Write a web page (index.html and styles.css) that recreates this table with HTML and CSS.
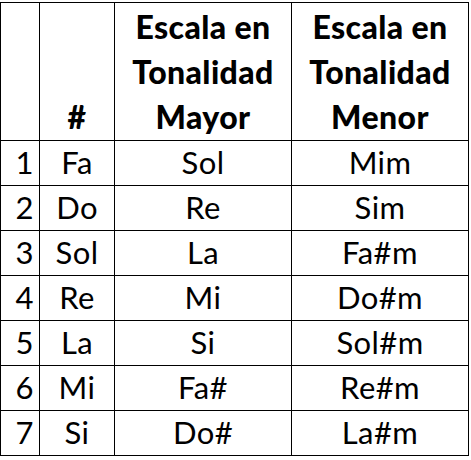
FILE: index.html
```html
<!DOCTYPE html>
<html lang="es">
<head>
<meta charset="utf-8">
<title>Escalas</title>
<link rel="stylesheet" href="styles.css">
</head>
<body>
<div class="sheet">
  <div class="grid">
    <div class="cell head"></div>
    <div class="cell head">#</div>
    <div class="cell head">Escala en<br>Tonalidad<br>Mayor</div>
    <div class="cell head">Escala en<br>Tonalidad<br>Menor</div>

    <div class="cell num">1</div><div class="cell">Fa</div><div class="cell">Sol</div><div class="cell">Mim</div>
    <div class="cell num">2</div><div class="cell">Do</div><div class="cell">Re</div><div class="cell">Sim</div>
    <div class="cell num">3</div><div class="cell">Sol</div><div class="cell">La</div><div class="cell">Fa#m</div>
    <div class="cell num">4</div><div class="cell">Re</div><div class="cell">Mi</div><div class="cell">Do#m</div>
    <div class="cell num">5</div><div class="cell">La</div><div class="cell">Si</div><div class="cell">Sol#m</div>
    <div class="cell num">6</div><div class="cell">Mi</div><div class="cell">Fa#</div><div class="cell">Re#m</div>
    <div class="cell num">7</div><div class="cell">Si</div><div class="cell">Do#</div><div class="cell">La#m</div>
  </div>
</div>
</body>
</html>
```
FILE: styles.css
```css
html, body {
  margin: 0;
  padding: 0;
  background: #fff;
}

body {
  font-family: "Lato", "Liberation Sans", sans-serif;
  color: #000;
}

.sheet {
  padding-top: 2px;
}

.grid {
  display: grid;
  grid-template-columns: 38px 74px 176px 176px;
  grid-template-rows: 137px repeat(7, 44px);
  gap: 1px;
  padding: 1px;
  background: #000;
  width: max-content;
}

.cell {
  background: #fff;
  display: flex;
  align-items: flex-end;
  justify-content: center;
  text-align: center;
  font-size: 31px;
  letter-spacing: 0.4px;
  line-height: 42px;
  padding-bottom: 2px;
  box-sizing: border-box;
}

.cell.num {
  justify-content: flex-end;
  padding-right: 5px;
}

.cell.head {
  font-weight: 900;
  font-size: 32px;
  letter-spacing: 0.4px;
  line-height: 45px;
  padding-bottom: 1px;
}
```
